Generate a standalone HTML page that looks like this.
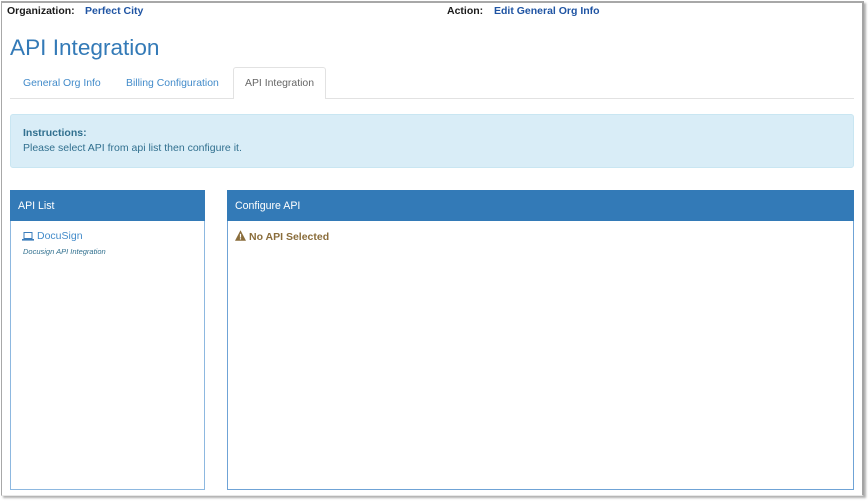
<!DOCTYPE html>
<html>
<head>
<meta charset="utf-8">
<style>
html,body{margin:0;padding:0;background:#fff;}
body{width:868px;height:501px;position:relative;overflow:hidden;font-family:"Liberation Sans",Arial,sans-serif;}
.a{position:absolute;white-space:nowrap;}
.t{filter:blur(0.3px);}
.frame{position:absolute;left:1px;top:1px;width:860px;height:492px;background:#fff;border-top:2px solid #a8a8a8;border-left:1px solid #a8a8a8;border-right:2px solid #a4a4a4;border-bottom:1px solid #e8e8e8;box-shadow:2px 2px 2px #b0b0b0;}
.lbl{font-size:10.5px;font-weight:bold;color:#1a1a1a;line-height:12px;}
.val{font-size:10.5px;font-weight:bold;color:#1f54a3;line-height:12px;}
.tab{font-size:10.45px;color:#428bca;line-height:14px;}
.panel{position:absolute;box-sizing:border-box;border:1px solid #6fa3d6;background:#fff;}
.head{position:absolute;left:-1px;top:-1px;right:-1px;height:31px;background:#337ab7;}
.ht{color:#fff;font-size:10.6px;line-height:14px;}
</style>
</head>
<body>
<div class="frame"></div>

<div class="a t lbl" style="left:7px;top:5px;">Organization:</div>
<div class="a t val" style="left:85px;top:5px;">Perfect City</div>
<div class="a t lbl" style="left:447px;top:5px;">Action:</div>
<div class="a t val" style="left:494px;top:5px;">Edit General Org Info</div>

<div class="a t" style="left:10px;top:34px;font-size:22.6px;line-height:28px;color:#337ab7;">API Integration</div>

<div class="a" style="left:10px;top:98px;width:844px;height:1px;background:#e2e2e2;"></div>
<div class="a t tab" style="left:23px;top:77px;">General Org Info</div>
<div class="a t tab" style="left:126px;top:77px;">Billing Configuration</div>
<div class="a" style="left:233px;top:67px;width:93px;height:32px;box-sizing:border-box;border:1px solid #e2e2e2;border-bottom:none;border-radius:3px 3px 0 0;background:#fff;"></div>
<div class="a t tab" style="left:245px;top:77px;color:#666;">API Integration</div>

<div class="a" style="left:10px;top:114px;width:844px;height:54px;box-sizing:border-box;background:#d9edf7;border:1px solid #c9e6f2;border-radius:3px;"></div>
<div class="a t" style="left:23px;top:126px;font-size:10.5px;line-height:14px;font-weight:bold;color:#31708f;">Instructions:</div>
<div class="a t" style="left:23px;top:141px;font-size:10.5px;line-height:14px;color:#31708f;">Please select API from api list then configure it.</div>

<div class="panel" style="left:10px;top:190px;width:195px;height:300px;border-color:#8db8e0;">
  <div class="head"></div>
</div>
<div class="a t ht" style="left:18px;top:199px;">API List</div>
<svg class="a" style="left:22px;top:232px;" width="12" height="9" viewBox="0 0 12 9">
  <rect x="2" y="0.5" width="8" height="6" fill="none" stroke="#3b7dbb" stroke-width="1"/>
  <rect x="0" y="7" width="12" height="1.6" fill="#3b7dbb"/>
</svg>
<div class="a t" style="left:37px;top:229px;font-size:10.5px;line-height:14px;color:#428bca;">DocuSign</div>
<div class="a t" style="left:23px;top:247px;font-size:7.5px;line-height:10px;font-style:italic;color:#31708f;">Docusign API Integration</div>

<div class="panel" style="left:227px;top:190px;width:627px;height:300px;">
  <div class="head"></div>
</div>
<div class="a t ht" style="left:235px;top:199px;">Configure API</div>
<svg class="a" style="left:235px;top:230px;" width="11" height="11" viewBox="0 0 11 11">
  <path d="M5.5 0.3 L11 10.7 L0 10.7 Z" fill="#8a6d3b"/>
  <rect x="4.9" y="3.8" width="1.2" height="3.8" fill="#fff"/>
  <rect x="4.9" y="8.2" width="1.2" height="1.3" fill="#fff"/>
</svg>
<div class="a t" style="left:249px;top:230px;font-size:10.5px;line-height:14px;font-weight:bold;color:#8a6d3b;">No API Selected</div>
</body>
</html>
